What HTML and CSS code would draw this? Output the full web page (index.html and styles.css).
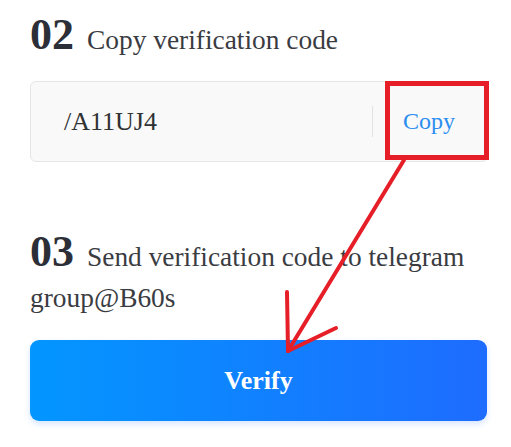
FILE: index.html
```html
<!DOCTYPE html>
<html>
<head>
<meta charset="utf-8">
<link rel="stylesheet" href="styles.css">
</head>
<body>
<div class="page">
  <div class="step step-first">
    <span class="num">02</span><span class="label">Copy verification code</span>
  </div>
  <div class="code-box">
    <div class="code">/A11UJ4</div>
    <div class="divider"></div>
    <div class="copy">Copy</div>
  </div>
  <div class="step step-second">
    <span class="num">03</span><span class="label">Send verification code to telegram</span> <span class="label">group@B60s</span>
  </div>
  <button class="verify">Verify</button>

  <svg class="annot" width="511" height="447" viewBox="0 0 511 447">
    <rect x="387.5" y="83.5" width="99" height="74" fill="none" stroke="#e61e28" stroke-width="5"/>
    <g stroke="#e61e28" stroke-width="4" stroke-linecap="round" fill="none">
      <line x1="404" y1="160" x2="288" y2="351"/>
      <line x1="287" y1="292" x2="288" y2="351"/>
      <line x1="288" y1="351" x2="336" y2="328"/>
    </g>
  </svg>
</div>
</body>
</html>
```
FILE: styles.css
```css
html, body {
  margin: 0;
  padding: 0;
  background: #ffffff;
}
.page {
  position: relative;
  width: 511px;
  height: 447px;
  box-sizing: border-box;
  padding: 14px 23px 0 30px;
  font-family: "Liberation Serif", "Times New Roman", serif;
  color: #303133;
  overflow: hidden;
}
.step {
  font-size: 27.4px;
  line-height: 41px;
}
.num {
  font-size: 44px;
  font-weight: bold;
  color: #2c2f37;
  margin-right: 13px;
}
.label {
  color: #3a3c42;
}
.code-box {
  margin-top: 20px;
  height: 81px;
  box-sizing: border-box;
  border: 1px solid #e6e6e6;
  border-radius: 6px;
  background: #f9f9f9;
  display: flex;
  align-items: center;
}
.code {
  flex: 1;
  padding-left: 33px;
  font-size: 26px;
  color: #303133;
}
.divider {
  width: 1px;
  height: 31px;
  background: #e2e2e2;
}
.copy {
  flex: 0 0 112px;
  text-align: center;
  font-size: 24px;
  color: #2b8ef0;
  padding-right: 2px;
}
.step-second {
  margin-top: 69px;
}
.verify {
  display: block;
  margin-top: 21px;
  width: 457px;
  height: 81px;
  border: none;
  border-radius: 9px;
  background: linear-gradient(90deg, #0396ff 0%, #1e6cff 100%);
  box-shadow: 0 3px 6px rgba(30, 110, 255, 0.18);
  color: #ffffff;
  font-family: "Liberation Serif", "Times New Roman", serif;
  font-size: 26px;
  font-weight: bold;
  padding: 0;
}
.annot {
  position: absolute;
  left: 0;
  top: 0;
  pointer-events: none;
}
```
